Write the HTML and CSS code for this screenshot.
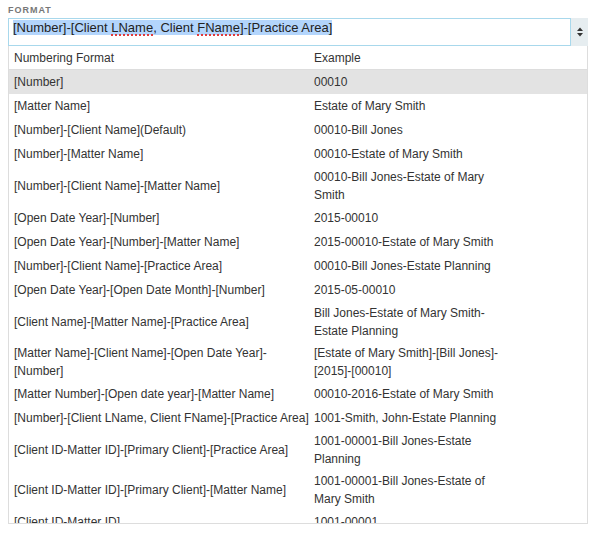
FILE: index.html
```html
<!DOCTYPE html>
<html>
<head>
<meta charset="utf-8">
<link rel="stylesheet" href="styles.css">
</head>
<body>
<div class="field">
  <div class="label">FORMAT</div>
  <div class="select">
    <div class="select-input"><span class="sel">[Number]-[Client <span class="spell">LName</span>, Client <span class="spell">FName</span>]-[Practice Area]</span></div>
    <div class="select-arrow">
      <svg width="6" height="10" viewBox="0 0 6 10"><polygon points="0,4 3,0.5 6,4" fill="#333"/><polygon points="0,6 3,9.5 6,6" fill="#333"/></svg>
    </div>
  </div>
  <div class="list">
    <div class="row head"><div class="c1">Numbering Format</div><div class="c2">Example</div></div>
    <div class="row active"><div class="c1">[Number]</div><div class="c2">00010</div></div>
    <div class="row"><div class="c1">[Matter Name]</div><div class="c2">Estate of Mary Smith</div></div>
    <div class="row"><div class="c1">[Number]-[Client Name](Default)</div><div class="c2">00010-Bill Jones</div></div>
    <div class="row"><div class="c1">[Number]-[Matter Name]</div><div class="c2">00010-Estate of Mary Smith</div></div>
    <div class="row"><div class="c1">[Number]-[Client Name]-[Matter Name]</div><div class="c2">00010-Bill Jones-Estate of Mary Smith</div></div>
    <div class="row"><div class="c1">[Open Date Year]-[Number]</div><div class="c2">2015-00010</div></div>
    <div class="row"><div class="c1">[Open Date Year]-[Number]-[Matter Name]</div><div class="c2">2015-00010-Estate of Mary Smith</div></div>
    <div class="row"><div class="c1">[Number]-[Client Name]-[Practice Area]</div><div class="c2">00010-Bill Jones-Estate Planning</div></div>
    <div class="row"><div class="c1">[Open Date Year]-[Open Date Month]-[Number]</div><div class="c2">2015-05-00010</div></div>
    <div class="row"><div class="c1">[Client Name]-[Matter Name]-[Practice Area]</div><div class="c2">Bill Jones-Estate of Mary Smith-Estate Planning</div></div>
    <div class="row"><div class="c1">[Matter Name]-[Client Name]-[Open Date Year]-[Number]</div><div class="c2">[Estate of Mary Smith]-[Bill Jones]-[2015]-[00010]</div></div>
    <div class="row"><div class="c1">[Matter Number]-[Open date year]-[Matter Name]</div><div class="c2">00010-2016-Estate of Mary Smith</div></div>
    <div class="row"><div class="c1">[Number]-[Client LName, Client FName]-[Practice Area]</div><div class="c2">1001-Smith, John-Estate Planning</div></div>
    <div class="row"><div class="c1">[Client ID-Matter ID]-[Primary Client]-[Practice Area]</div><div class="c2">1001-00001-Bill Jones-Estate Planning</div></div>
    <div class="row"><div class="c1">[Client ID-Matter ID]-[Primary Client]-[Matter Name]</div><div class="c2">1001-00001-Bill Jones-Estate of Mary Smith</div></div>
    <div class="row"><div class="c1">[Client ID-Matter ID]</div><div class="c2">1001-00001</div></div>
  </div>
</div>
</body>
</html>
```
FILE: styles.css
```css
* { box-sizing: border-box; }
body {
  margin: 0;
  background: #fff;
  font-family: "Liberation Sans", Arial, sans-serif;
  color: #333;
}
.field {
  margin-left: 8px;
  width: 580px;
  padding-top: 4px;
}
.label {
  font-size: 9px;
  font-weight: bold;
  letter-spacing: 1px;
  line-height: 12px;
  color: #777;
  margin-bottom: 2px;
}
.select {
  display: flex;
  height: 28px;
}
.select-input {
  flex: 1;
  border: 1px solid #a8d8ec;
  padding: 1px 4px;
  font-size: 13px;
  line-height: 16px;
  color: #222;
  white-space: nowrap;
  overflow: hidden;
}
.sel {
  background: #b3d5fc;
}
.spell {
  text-decoration: underline dotted #e03a3a;
  text-decoration-thickness: 2px;
  text-underline-offset: 2px;
}
.select-arrow {
  width: 17px;
  background: #e6edf0;
  display: flex;
  align-items: center;
  justify-content: center;
}
.select-arrow svg { display: block; }
.list {
  border: 1px solid #ddd;
  border-top: none;
  height: 478px;
  overflow: hidden;
  font-size: 12px;
}
.row {
  display: grid;
  grid-template-columns: 305px 196px;
  align-items: center;
  min-height: 24px;
  padding: 2px 0;
  line-height: 18px;
}
.row .c1 { padding-left: 5px; }
.row.head {
  height: 24px;
  border-bottom: 1px solid #ddd;
  padding: 0;
}
.row.active {
  background: #e3e3e3;
}
```
